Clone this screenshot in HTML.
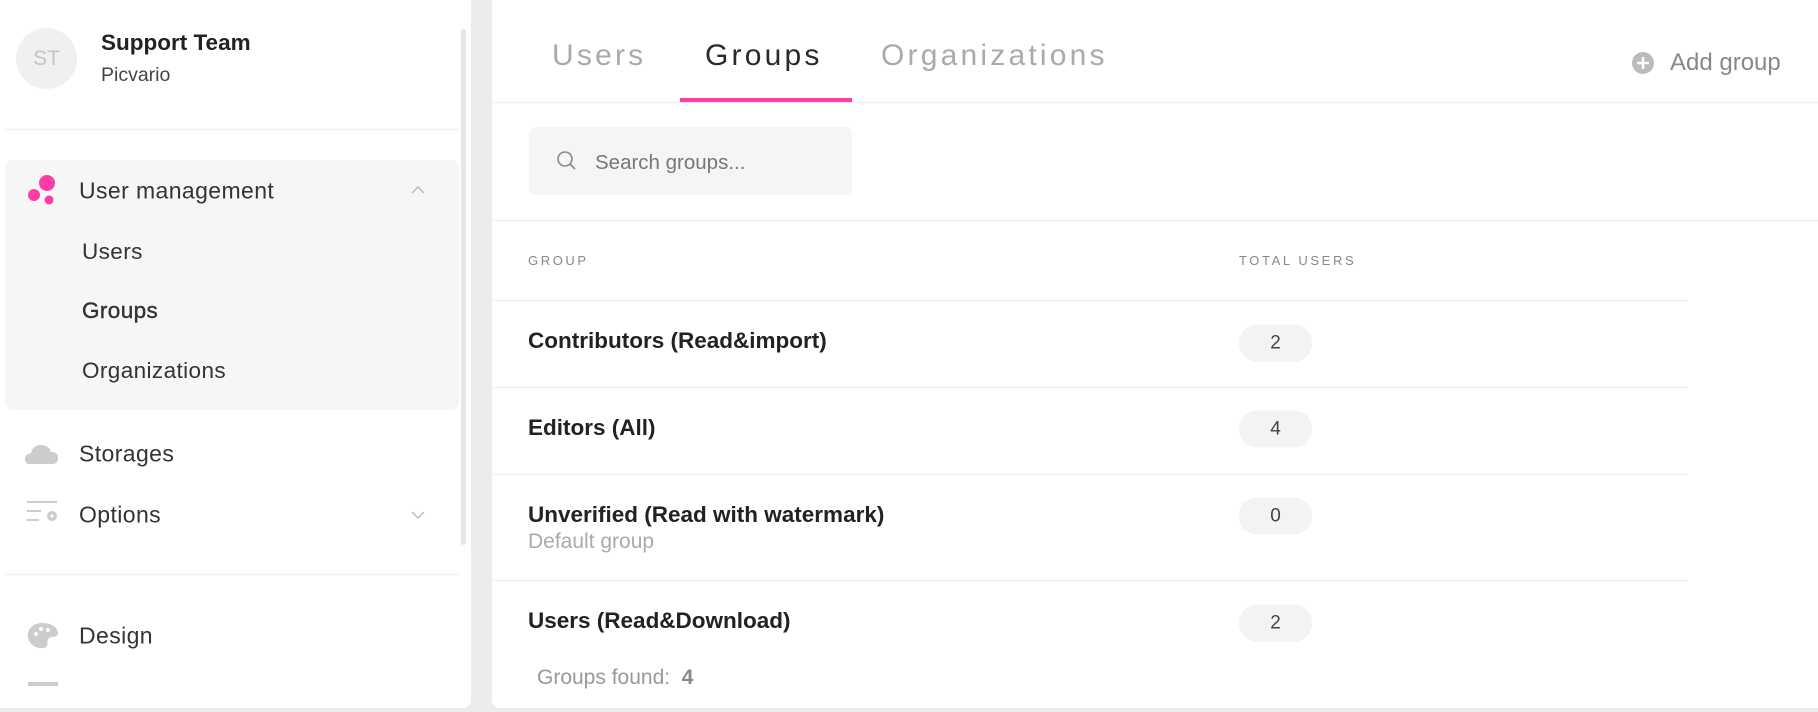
<!DOCTYPE html>
<html><head><meta charset="utf-8"><style>
*{margin:0;padding:0;box-sizing:border-box}
body{width:1818px;height:712px;background:#ececec;font-family:"Liberation Sans",sans-serif;position:relative;overflow:hidden;color:#222}
.abs{position:absolute;white-space:nowrap}
#side{position:absolute;left:0;top:0;width:471px;height:708px;background:#fff;border-radius:0 0 8px 0}
#main{position:absolute;left:492px;top:0;width:1326px;height:708px;background:#fff;border-radius:0 0 0 8px}
.nav{font-size:23px;color:#333;letter-spacing:.4px;transform:translateY(-50%)}
.sub{font-size:22.5px;color:#333;letter-spacing:.4px;transform:translateY(-50%)}
.hl{position:absolute;height:1px;background:#eee}
.tab{font-size:30px;letter-spacing:3.2px;color:#aaa;transform:translateY(-50%)}
.rowt{font-size:22.5px;font-weight:bold;color:#222;transform:translateY(-50%)}
.badge{position:absolute;left:747px;width:73px;height:37px;border-radius:18px;background:#f3f3f3;font-size:19px;color:#444;text-align:center;line-height:37px;transform:translateY(-50%)}
</style></head><body>
<div id="side">
  <div class="abs" style="left:16px;top:28px;width:61px;height:61px;border-radius:50%;background:#f0f0f0;color:#c4c4c4;font-size:21px;text-align:center;line-height:61px">ST</div>
  <div class="abs" style="left:101px;top:30px;font-size:22.5px;font-weight:bold;color:#222">Support Team</div>
  <div class="abs" style="left:101px;top:64px;font-size:19.5px;color:#444">Picvario</div>
  <div class="hl" style="left:5px;width:454px;top:129px"></div>
  <div class="abs" style="left:5px;top:160px;width:454px;height:250px;background:#f6f6f6;border-radius:8px"></div>
  <svg class="abs" style="left:24px;top:172px" width="36" height="36"><circle cx="23" cy="11" r="8" fill="#ff3ea5"/><circle cx="10" cy="23" r="6" fill="#ff3ea5"/><circle cx="25" cy="28" r="4.5" fill="#ff3ea5"/></svg>
  <div class="abs nav" style="left:79px;top:191px">User management</div>
  <svg class="abs" style="left:410px;top:184px" width="16" height="12"><path d="M2 9 L8 3 L14 9" fill="none" stroke="#bbb" stroke-width="1.5"/></svg>
  <div class="abs sub" style="left:82px;top:252px">Users</div>
  <div class="abs sub" style="left:82px;top:311px;color:#333;-webkit-text-stroke:.4px #333">Groups</div>
  <div class="abs sub" style="left:82px;top:371px">Organizations</div>
  <svg class="abs" style="left:25px;top:440px" width="36" height="26"><path d="M4 24 Q0 24 0 19 Q0 14 6 13 Q8 5 16 5 Q24 5 26 12 Q33 12 33 18 Q33 24 27 24 Z" fill="#ccc"/></svg>
  <div class="abs nav" style="left:79px;top:454px">Storages</div>
  <svg class="abs" style="left:27px;top:500px" width="34" height="30"><rect x="0" y="1" width="30" height="2" fill="#ccc"/><rect x="0" y="10" width="14" height="2" fill="#ccc"/><rect x="0" y="19" width="12" height="2" fill="#ccc"/><circle cx="25" cy="16" r="5" fill="#ccc"/><circle cx="25" cy="16" r="1.6" fill="#fff"/></svg>
  <div class="abs nav" style="left:79px;top:515px">Options</div>
  <svg class="abs" style="left:410px;top:509px" width="16" height="12"><path d="M2 3 L8 9 L14 3" fill="none" stroke="#bbb" stroke-width="1.5"/></svg>
  <div class="hl" style="left:5px;width:454px;top:574px"></div>
  <svg class="abs" style="left:27px;top:622px" width="32" height="28"><path d="M15 1 C25 1 31 6 31 11 C31 16 25 14 22 16 C19 18 22 22 19 25 C16 28 1 26 1 13 C1 6 7 1 15 1 Z" fill="#ccc"/><circle cx="9" cy="12" r="2" fill="#fff"/><circle cx="14" cy="7" r="2" fill="#fff"/><circle cx="21" cy="8" r="2" fill="#fff"/></svg>
  <div class="abs nav" style="left:79px;top:636px">Design</div>
  <div class="abs" style="left:28px;top:682px;width:30px;height:4px;background:#ccc"></div>
  <div class="abs" style="left:461px;top:29px;width:5px;height:516px;background:#e6e6e6;border-radius:3px"></div>
</div>
<div id="main">
  <div class="abs tab" style="left:60px;top:56px">Users</div>
  <div class="abs tab" style="left:213px;top:56px;color:#2a2a2a">Groups</div>
  <div class="abs tab" style="left:389px;top:56px">Organizations</div>
  <div class="hl" style="left:0;width:1326px;top:102px"></div>
  <div class="abs" style="left:188px;top:98px;width:172px;height:4px;background:#ff3ea5"></div>
  <svg class="abs" style="left:1139px;top:51px" width="24" height="24"><circle cx="12" cy="12" r="11" fill="#bbb"/><path d="M12 6V18M6 12H18" stroke="#fff" stroke-width="2.4"/></svg>
  <div class="abs" style="left:1178px;top:49px;font-size:24px;color:#888">Add group</div>
  <div class="abs" style="left:37px;top:127px;width:323px;height:68px;background:#f5f5f5;border-radius:7px"></div>
  <svg class="abs" style="left:64px;top:150px" width="22" height="22"><circle cx="9" cy="9" r="7" fill="none" stroke="#888" stroke-width="1.6"/><path d="M14 14L19 19" stroke="#888" stroke-width="1.6"/></svg>
  <div class="abs" style="left:103px;top:151px;font-size:20.5px;color:#777">Search groups...</div>
  <div class="hl" style="left:0;width:1326px;top:220px"></div>
  <div class="abs" style="left:36px;top:253px;font-size:13px;letter-spacing:2.6px;color:#888">GROUP</div>
  <div class="abs" style="left:747px;top:253px;font-size:13px;letter-spacing:2.6px;color:#888">TOTAL USERS</div>
  <div class="hl" style="left:0;width:1196px;top:300px"></div>
  <div class="abs rowt" style="left:36px;top:341px">Contributors (Read&amp;import)</div>
  <div class="badge" style="top:343px">2</div>
  <div class="hl" style="left:0;width:1196px;top:387px"></div>
  <div class="abs rowt" style="left:36px;top:428px">Editors (All)</div>
  <div class="badge" style="top:429px">4</div>
  <div class="hl" style="left:0;width:1196px;top:474px"></div>
  <div class="abs rowt" style="left:36px;top:515px">Unverified (Read with watermark)</div>
  <div class="abs" style="left:36px;top:530px;font-size:21px;color:#aaa">Default group</div>
  <div class="badge" style="top:516px">0</div>
  <div class="hl" style="left:0;width:1196px;top:580px"></div>
  <div class="abs rowt" style="left:36px;top:621px">Users (Read&amp;Download)</div>
  <div class="badge" style="top:623px">2</div>
  <div class="abs" style="left:45px;top:666px;font-size:21px;color:#999">Groups found:&nbsp; <b style="color:#888">4</b></div>
</div>
</body></html>
